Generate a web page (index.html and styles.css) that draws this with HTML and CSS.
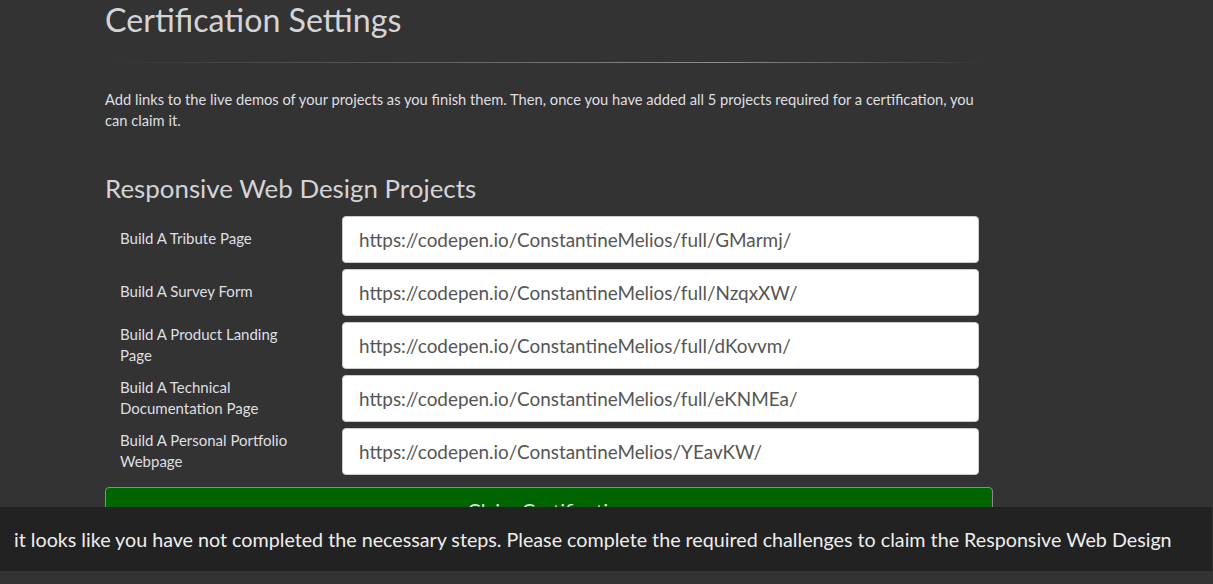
FILE: index.html
```html
<!DOCTYPE html>
<html lang="en">
<head>
<meta charset="utf-8">
<title>Certification Settings</title>
<link rel="stylesheet" href="styles.css">
</head>
<body>
<main class="page">
  <h1 class="title">Certification Settings</h1>
  <hr class="divider">
  <p class="intro">Add links to the live demos of your projects as you finish them. Then, once you have added all 5 projects required for a certification, you can claim it.</p>
  <h2 class="section-title">Responsive Web Design Projects</h2>
  <form class="projects">
    <div class="row">
      <label class="label" for="p1">Build A Tribute Page</label>
      <input class="field" id="p1" type="text" value="https://codepen.io/ConstantineMelios/full/GMarmj/">
    </div>
    <div class="row">
      <label class="label" for="p2">Build A Survey Form</label>
      <input class="field" id="p2" type="text" value="https://codepen.io/ConstantineMelios/full/NzqxXW/">
    </div>
    <div class="row">
      <label class="label" for="p3">Build A Product Landing Page</label>
      <input class="field" id="p3" type="text" value="https://codepen.io/ConstantineMelios/full/dKovvm/">
    </div>
    <div class="row">
      <label class="label" for="p4">Build A Technical Documentation Page</label>
      <input class="field" id="p4" type="text" value="https://codepen.io/ConstantineMelios/full/eKNMEa/">
    </div>
    <div class="row">
      <label class="label" for="p5">Build A Personal Portfolio Webpage</label>
      <input class="field" id="p5" type="text" value="https://codepen.io/ConstantineMelios/YEavKW/">
    </div>
    <button class="claim" type="button">Claim Certification</button>
  </form>
</main>
<div class="toast">it looks like you have not completed the necessary steps. Please complete the required challenges to claim the Responsive Web Design</div>
</body>
</html>
```
FILE: styles.css
```css
html, body {
  margin: 0;
  padding: 0;
  background: #333333;
  height: 100%;
  overflow: hidden;
}
body {
  font-family: Lato, "Open Sans", sans-serif;
  color: #dfdfe2;
}
.page {
  width: 888px;
  margin-left: 105px;
}
.title {
  margin: 0;
  font-size: 32.2px;
  font-weight: 400;
  line-height: 40px;
  color: #d4d4d8;
}
.divider {
  margin: 22px 0 0 0;
  width: 880px;
  height: 1px;
  border: 0;
  background-image: linear-gradient(to right, rgba(140,140,140,0), rgba(150,150,150,0.9) 70%, rgba(140,140,140,0));
}
.intro {
  margin: 26px 0 0 0;
  font-size: 14.7px;
  line-height: 21px;
  color: #dfdfe2;
}
.section-title {
  margin: 41px 0 0 0;
  font-size: 25.9px;
  font-weight: 400;
  line-height: 32px;
  color: #d4d4d8;
}
.projects {
  margin-top: 12px;
  display: flex;
  flex-direction: column;
  gap: 6px;
}
.row {
  display: grid;
  grid-template-columns: 237px 637px;
  height: 47px;
  align-items: center;
}
.label {
  padding: 0 0 2px 15px;
  width: 180px;
  font-size: 15px;
  line-height: 21px;
  color: #dfdfe2;
}
.field {
  box-sizing: border-box;
  height: 47px;
  margin: 0;
  padding: 0 16px;
  border: 1px solid #cccccc;
  border-radius: 4px;
  background: #ffffff;
  font-family: Lato, "Open Sans", sans-serif;
  font-size: 18.9px;
  color: #555555;
  outline: none;
}
.claim {
  margin-top: 6px;
  box-sizing: border-box;
  width: 888px;
  height: 46px;
  border: 1px solid #8a8a8a;
  border-radius: 4px;
  background: #006400;
  color: #dfdfe2;
  font-family: Lato, "Open Sans", sans-serif;
  font-size: 20px;
}
.toast {
  position: fixed;
  left: 0;
  right: 1px;
  bottom: 13px;
  height: 64px;
  box-sizing: border-box;
  padding: 0 14px;
  display: flex;
  align-items: center;
  background: #222222;
  color: #eeeeee;
  font-size: 19.7px;
  white-space: nowrap;
}
```
